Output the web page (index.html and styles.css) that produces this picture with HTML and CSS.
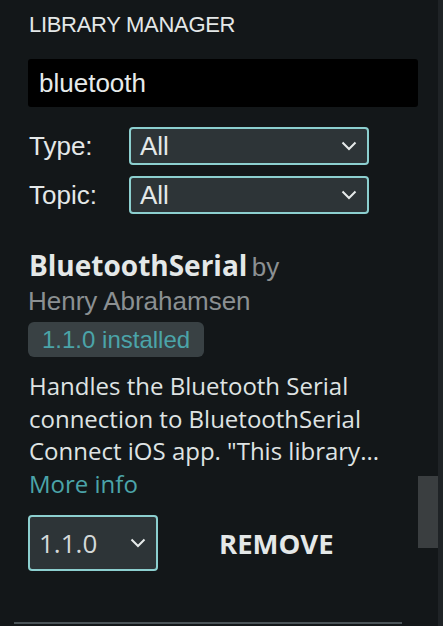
FILE: index.html
```html
<!DOCTYPE html>
<html>
<head>
<meta charset="utf-8">
<link rel="stylesheet" href="styles.css">
</head>
<body>
<div class="app">
  <div class="panel">
    <div class="title">LIBRARY MANAGER</div>
    <div class="search">bluetooth</div>
    <div class="filter-row first">
      <span class="flabel">Type:</span>
      <div class="select"><span>All</span><svg class="chev" width="16" height="10" viewBox="0 0 16 10"><path d="M1.5 1.5 L8 8 L14.5 1.5" fill="none" stroke="#e6eaea" stroke-width="2"/></svg></div>
    </div>
    <div class="filter-row">
      <span class="flabel">Topic:</span>
      <div class="select"><span>All</span><svg class="chev" width="16" height="10" viewBox="0 0 16 10"><path d="M1.5 1.5 L8 8 L14.5 1.5" fill="none" stroke="#e6eaea" stroke-width="2"/></svg></div>
    </div>
    <div class="lib">
      <div class="lib-head"><span class="lib-name">BluetoothSerial</span> <span class="by">by</span></div>
      <div class="author">Henry Abrahamsen</div>
      <div class="badge">1.1.0 installed</div>
      <div class="desc">Handles the Bluetooth Serial connection to BluetoothSerial Connect iOS app. "This library...</div>
      <div class="more">More info</div>
      <div class="actions">
        <div class="vselect"><span>1.1.0</span><svg class="chev" width="16" height="10" viewBox="0 0 16 10"><path d="M1.5 1.5 L8 8 L14.5 1.5" fill="none" stroke="#e6eaea" stroke-width="2"/></svg></div>
        <div class="remove">REMOVE</div>
      </div>
    </div>
    <div class="divider"></div>
  </div>
  <div class="scroll"><div class="thumb"></div></div>
  <div class="edge"></div>
</div>
</body>
</html>
```
FILE: styles.css
```css
html, body {
  margin: 0;
  padding: 0;
  background: #131719;
  width: 443px;
  height: 626px;
  overflow: hidden;
}
.app {
  display: flex;
  height: 626px;
}
.panel {
  width: 418px;
  padding-left: 28px;
  box-sizing: border-box;
  display: flex;
  flex-direction: column;
  font-family: "Liberation Sans", Arial, sans-serif;
  color: #e4e8e8;
}
.title {
  font-size: 22px;
  margin-top: 13px;
  padding-left: 1px;
  height: 24px;
  line-height: 24px;
  letter-spacing: -0.3px;
}
.search {
  margin-top: 22px;
  height: 48px;
  background: #000;
  border-radius: 3px;
  font-size: 26px;
  line-height: 48px;
  padding-left: 11px;
  color: #e6eaea;
}
.filter-row {
  display: flex;
  align-items: center;
  margin-top: 11px;
  height: 38px;
}
.filter-row.first { margin-top: 20px; }
.flabel {
  width: 100px;
  font-size: 26px;
  padding-left: 1px;
}
.select {
  width: 240px;
  height: 38px;
  box-sizing: border-box;
  border: 2px solid #8ccfcf;
  border-radius: 4px;
  background: #2d3437;
  display: flex;
  align-items: center;
  justify-content: space-between;
  padding: 0 10px 0 9px;
  font-size: 26px;
}
.lib {
  margin-top: 34px;
  display: flex;
  flex-direction: column;
}
.lib-head {
  height: 34px;
  line-height: 34px;
  padding-left: 1px;
  white-space: nowrap;
}
.lib-name {
  font-family: "Open Sans", sans-serif;
  font-weight: 700;
  font-size: 28px;
  color: #e4e8e8;
}
.by {
  font-size: 26px;
  color: #8b9092;
}
.author {
  font-size: 26px;
  color: #8b9092;
  height: 32px;
  line-height: 32px;
  margin-top: 3px;
}
.badge {
  align-self: flex-start;
  margin-top: 5px;
  height: 35px;
  line-height: 36px;
  padding: 0 14px;
  background: #394144;
  border-radius: 6px;
  color: #4ba4a9;
  font-size: 24px;
}
.desc {
  margin-top: 13px;
  font-family: "Open Sans", sans-serif;
  font-size: 24px;
  line-height: 32.5px;
  color: #dfe3e3;
  width: 385px;
  padding-left: 1px;
}
.more {
  font-family: "Open Sans", sans-serif;
  font-size: 24px;
  line-height: 32.5px;
  color: #4ba4a9;
  padding-left: 1px;
}
.actions {
  display: flex;
  align-items: center;
  margin-top: 15px;
}
.vselect {
  width: 130px;
  height: 56px;
  box-sizing: border-box;
  border: 2px solid #8ccfcf;
  border-radius: 4px;
  background: #2d3437;
  display: flex;
  align-items: center;
  justify-content: space-between;
  padding: 0 10px 0 9px;
  font-family: "Open Sans", sans-serif;
  font-size: 26px;
  color: #d4d9d9;
}
.remove {
  margin-left: 61px;
  font-family: "Open Sans", sans-serif;
  font-weight: 700;
  font-size: 27.5px;
  color: #e4e8e8;
}
.divider {
  margin-top: auto;
  margin-left: -14px;
  width: 388px;
  height: 2px;
  background: #4b5458;
  margin-bottom: 2px;
}
.scroll {
  width: 20px;
  display: flex;
  flex-direction: column;
}
.thumb {
  margin-top: 476px;
  height: 72px;
  background: #3a3e40;
}
.edge {
  width: 5px;
  background: #1f2326;
}
```
